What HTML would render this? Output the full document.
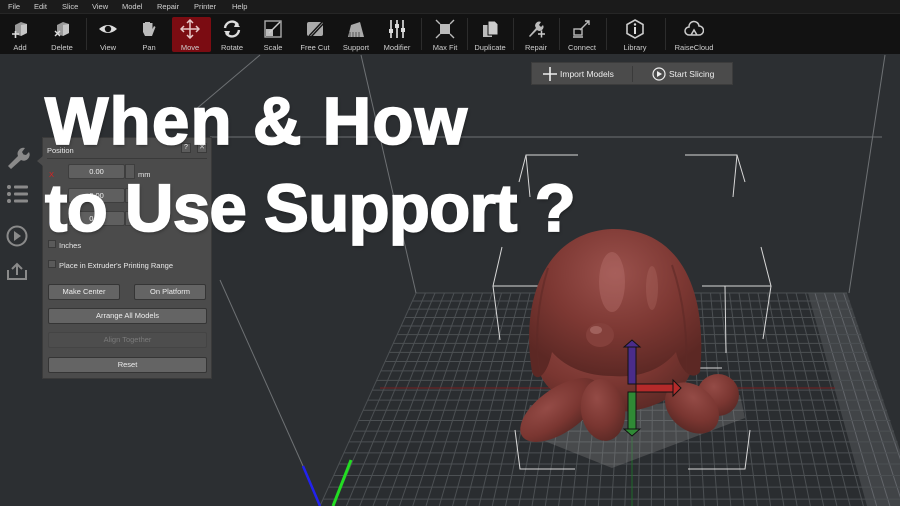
<!DOCTYPE html>
<html><head><meta charset="utf-8"><style>
*{margin:0;padding:0;box-sizing:border-box}
body{width:900px;height:506px;overflow:hidden;background:#2c2f32;font-family:"Liberation Sans",sans-serif;position:relative}
#menu{position:absolute;left:0;top:0;width:900px;height:13px;background:#1b1b1b;color:#d0d0d0;font-size:7.5px}
#menu span{position:absolute;top:2px}
#tb{position:absolute;left:0;top:13px;width:900px;height:41px;background:#121212;border-top:1px solid #262626}
.ti{position:absolute;top:0;width:42px;height:41px;text-align:center;color:#cfcfcf;font-size:7.5px}
.ti svg{position:absolute;left:11px;top:5px}
.ti b{position:absolute;left:-10px;right:-10px;top:29px;font-weight:normal}
.sep{position:absolute;top:4px;width:1px;height:32px;background:#2c2c2c}
.abs{position:absolute}
#panel{position:absolute;left:42px;top:137px;width:170px;height:242px;background:#4b4b4b;border:1px solid #3a3a3a;color:#e8e8e8;font-size:7.5px}
.btn{position:absolute;height:16px;background:#646464;border:1px solid #353535;border-radius:2px;text-align:center;line-height:14px;color:#eee;font-size:7.5px}
.spin{position:absolute;left:25px;width:57px;height:15px;background:#5f5f5f;border:1px solid #3e3e3e;border-radius:2px;text-align:center;line-height:13px;color:#eee}
.arr{position:absolute;left:82px;width:10px;height:15px;background:#5a5a5a;border:1px solid #3e3e3e}
.cb{position:absolute;left:5px;width:8px;height:8px;background:#5a5a5a;border:1px solid #3a3a3a}
.title{position:absolute;left:45px;color:#fff;font-weight:bold;font-size:67px;-webkit-text-stroke:1.8px #fff;text-shadow:1px 2px 3px rgba(0,0,0,.35);white-space:nowrap;line-height:1}
</style></head><body>

<svg class="abs" style="left:0;top:0" width="900" height="506" id="scene">
<defs>
<radialGradient id="bg1" cx="0.5" cy="0.3" r="0.7"><stop offset="0" stop-color="#9a514c"/><stop offset="0.55" stop-color="#7d3833"/><stop offset="1" stop-color="#5c2824"/></radialGradient>
<radialGradient id="bg2" cx="0.4" cy="0.3" r="0.75"><stop offset="0" stop-color="#944b46"/><stop offset="0.6" stop-color="#7a3631"/><stop offset="1" stop-color="#5a2925"/></radialGradient>
</defs>
<g id="grid"></g>
<g stroke="#6e7174" stroke-width="1" fill="none">
<line x1="361" y1="55" x2="416" y2="293"/>
<line x1="885" y1="55" x2="849" y2="293"/>
<line x1="210" y1="137" x2="882" y2="137"/>
<line x1="260" y1="55" x2="195" y2="110"/>
<line x1="220" y1="280" x2="303" y2="466"/>
</g>
<line x1="380" y1="388" x2="835" y2="388" stroke="#7a1f1f" stroke-width="1"/>
<line x1="632" y1="430" x2="632" y2="506" stroke="#1f6a2a" stroke-width="1"/>
<polygon points="522,432 612,468 745,418 740,395 600,410 530,405" fill="rgba(150,150,150,0.28)"/>
<g stroke="#d8d8d8" stroke-width="1" fill="none">
<polyline points="519,182 526,155 578,155"/><line x1="526" y1="155" x2="530" y2="197"/>
<polyline points="745,182 737,155 685,155"/><line x1="737" y1="155" x2="733" y2="197"/>
<polyline points="502,247 493,286 562,286"/><line x1="493" y1="286" x2="500" y2="340"/>
<polyline points="761,247 771,286 702,286"/><line x1="771" y1="286" x2="763" y2="339"/>
<line x1="725" y1="286" x2="726" y2="353"/><line x1="697" y1="368" x2="722" y2="368"/>
<polyline points="515,430 520,469 575,469"/>
<polyline points="750,430 745,469 688,469"/>
</g>
<g>
<ellipse cx="718" cy="395" rx="21" ry="21" fill="url(#bg2)"/>
<ellipse cx="615" cy="360" rx="78" ry="52" fill="url(#bg2)"/>
<path d="M532,372 C520,300 545,232 612,229 C680,228 708,290 700,372 C692,382 680,370 676,352 C660,372 635,378 612,376 C588,376 566,368 552,352 C548,372 538,385 532,372 Z" fill="url(#bg1)"/>
<path d="M548,268 C538,300 534,340 540,372" stroke="#5e2a26" stroke-width="2" fill="none" opacity="0.6"/>
<path d="M672,265 C684,300 688,340 686,372" stroke="#5e2a26" stroke-width="2" fill="none" opacity="0.6"/>
<ellipse cx="600" cy="335" rx="14" ry="12" fill="#84403b"/>
<ellipse cx="596" cy="330" rx="6" ry="4" fill="#a0615c"/>
<ellipse cx="560" cy="410" rx="46" ry="22" transform="rotate(-35 560 410)" fill="url(#bg2)"/>
<ellipse cx="603" cy="410" rx="22" ry="31" transform="rotate(-8 603 410)" fill="url(#bg2)"/>
<ellipse cx="692" cy="408" rx="30" ry="22" transform="rotate(40 692 408)" fill="url(#bg2)"/>
<ellipse cx="612" cy="282" rx="13" ry="30" fill="rgba(200,130,125,0.3)"/>
<ellipse cx="652" cy="288" rx="6" ry="22" fill="rgba(200,130,125,0.22)"/>
</g>
<g stroke="#111" stroke-width="1">
<rect x="628" y="346" width="8" height="38" fill="#4a2c8a"/>
<polygon points="624,347 632,340 640,347" fill="#4a2c8a"/>
<rect x="636" y="384" width="38" height="8" fill="#b52a2a"/>
<polygon points="673,380 681,388 673,396" fill="#b52a2a"/>
<rect x="628" y="392" width="8" height="38" fill="#2f8a35"/>
<polygon points="624,429 632,436 640,429" fill="#2f8a35"/>
</g>
<line x1="303" y1="466" x2="320" y2="506" stroke="#2222ee" stroke-width="2.5"/>
<line x1="351" y1="460" x2="333" y2="506" stroke="#22dd22" stroke-width="3"/>
</svg>
<script>
(function(){
var g=document.getElementById('grid'),s='';
var vx=659,vy=-246;
function L(y){return 416-0.45*(y-293)}
function O(y){return Math.min(900,847+0.34*(y-293))}
s+='<polygon points="416,293 847,293 900,450 900,506 320,506" fill="#2a2d30"/>';
s+='<polygon points="808,293 847,293 900,450 900,506 867,506" fill="rgba(120,123,126,0.3)"/>';
for(var x0=416;x0<=848;x0+=9.5){var x1=vx+(x0-vx)*(752/539);s+='<line x1="'+x0+'" y1="293" x2="'+x1+'" y2="506" stroke="'+(x0>808?'#62656a':'#4c5053')+'" stroke-width="1"/>';}
var y=293;while(y<507){s+='<line x1="'+L(y)+'" y1="'+y+'" x2="'+O(y)+'" y2="'+y+'" stroke="#4c5053" stroke-width="1"/>';y+=8*Math.pow((y+246)/539,1.3);}
g.innerHTML=s;
})();
</script>

<div id="menu">
<span style="left:8px">File</span><span style="left:34px">Edit</span><span style="left:62px">Slice</span><span style="left:92px">View</span><span style="left:122px">Model</span><span style="left:157px">Repair</span><span style="left:194px">Printer</span><span style="left:232px">Help</span>
</div>
<div id="tb">
<div class="abs" style="left:172px;top:3px;width:39px;height:35px;background:#7b0c12;border-radius:2px"></div>
<div class="ti" style="left:-1px"><svg width="20" height="20"><path d="M5 6 L11 3 L17 5 L17 14 L11 17 L5 15Z" fill="#9a9a9a"/><path d="M11 6 L17 5 L17 14 L11 17Z" fill="#c6c6c6"/><path d="M2 15h7M5.5 12v7" stroke="#ddd" stroke-width="1.6"/></svg><b>Add</b></div>
<div class="ti" style="left:41px"><svg width="20" height="20"><path d="M5 6 L11 3 L17 5 L17 14 L11 17 L5 15Z" fill="#9a9a9a"/><path d="M11 6 L17 5 L17 14 L11 17Z" fill="#c6c6c6"/><path d="M3 12l5 5M8 12l-5 5" stroke="#ddd" stroke-width="1.4"/></svg><b>Delete</b></div>
<div class="sep" style="left:86px"></div>
<div class="ti" style="left:87px"><svg width="20" height="20"><path d="M1 10 Q10 2 19 10 Q10 18 1 10Z" fill="#ddd"/><circle cx="10" cy="10" r="3.2" fill="#121212"/></svg><b>View</b></div>
<div class="ti" style="left:128px"><svg width="20" height="20"><path d="M4 8 V4 h2 V8 V3 h2.5 V8 V3 h2.5 V8 V4 h2.5 V10 L15 7 L16.5 8 L13 17 H6 L4 13Z" fill="#bbb"/></svg><b>Pan</b></div>
<div class="ti" style="left:169px"><svg width="20" height="20"><path d="M10 1 V19 M1 10 H19" stroke="#e8c8c8" stroke-width="1.5"/><path d="M7 4 L10 1 L13 4 M7 16 L10 19 L13 16 M4 7 L1 10 L4 13 M16 7 L19 10 L16 13" stroke="#e8c8c8" stroke-width="1.5" fill="none"/></svg><b>Move</b></div>
<div class="ti" style="left:211px"><svg width="20" height="20"><path d="M3 9 A7 7 0 0 1 16 6 M17 11 A7 7 0 0 1 4 14" stroke="#ddd" stroke-width="2.4" fill="none"/><path d="M14 3 L18 8 L12 8Z M6 17 L2 12 L8 12Z" fill="#ddd"/></svg><b>Rotate</b></div>
<div class="ti" style="left:252px"><svg width="20" height="20"><rect x="2" y="2" width="16" height="16" stroke="#aaa" stroke-width="1.4" fill="none"/><rect x="3" y="10" width="7" height="7" fill="#bbb"/><path d="M6 14 L17 3" stroke="#ccc" stroke-width="1.4"/></svg><b>Scale</b></div>
<div class="ti" style="left:294px"><svg width="20" height="20"><rect x="2" y="3" width="16" height="14" rx="2" fill="#aaa"/><path d="M4 17 L17 3 M6 18 L19 4" stroke="#121212" stroke-width="1.4"/></svg><b>Free Cut</b></div>
<div class="ti" style="left:335px"><svg width="20" height="20"><path d="M2 18 L5 6 L14 3 L18 18Z" fill="#aaa"/><path d="M4 18v-5M7 18v-5M10 18v-5M13 18v-5" stroke="#555" stroke-width="1"/></svg><b>Support</b></div>
<div class="ti" style="left:376px"><svg width="20" height="20"><path d="M4 1v18M10 1v18M16 1v18" stroke="#bbb" stroke-width="2"/><rect x="2" y="10" width="4" height="4" fill="#ddd"/><rect x="8" y="5" width="4" height="4" fill="#ddd"/><rect x="14" y="9" width="4" height="4" fill="#ddd"/></svg><b>Modifier</b></div>
<div class="sep" style="left:421px"></div>
<div class="ti" style="left:424px"><svg width="20" height="20"><rect x="5" y="5" width="10" height="10" fill="#bbb"/><path d="M1 1l4 4M19 1l-4 4M1 19l4-4M19 19l-4-4" stroke="#bbb" stroke-width="1.4"/></svg><b>Max Fit</b></div>
<div class="sep" style="left:467px"></div>
<div class="ti" style="left:469px"><svg width="20" height="20"><rect x="3" y="6" width="9" height="12" fill="#bbb"/><path d="M8 2h7l3 3v11H8Z" fill="#ccc" stroke="#121212" stroke-width="1"/></svg><b>Duplicate</b></div>
<div class="sep" style="left:513px"></div>
<div class="ti" style="left:515px"><svg width="20" height="20"><path d="M3 17 L10 9 A4 4 0 0 1 15 3 L13 6 L15 8 L17 6 A4 4 0 0 1 11 11 L4 18Z" fill="#bbb"/><path d="M12 15h7M15.5 11.5v7" stroke="#ccc" stroke-width="1.5"/></svg><b>Repair</b></div>
<div class="sep" style="left:559px"></div>
<div class="ti" style="left:561px"><svg width="20" height="20"><rect x="2" y="10" width="8" height="6" stroke="#bbb" fill="none" stroke-width="1.4"/><path d="M1 18h10M8 11 L17 2 M13 2h4v4" stroke="#bbb" stroke-width="1.4" fill="none"/></svg><b>Connect</b></div>
<div class="sep" style="left:606px"></div>
<div class="ti" style="left:614px"><svg width="20" height="20"><path d="M10 1 L18 5.5 V14.5 L10 19 L2 14.5 V5.5Z" stroke="#ccc" stroke-width="1.6" fill="none"/><path d="M10 8v7" stroke="#ddd" stroke-width="2"/><circle cx="10" cy="5.5" r="1.2" fill="#ddd"/></svg><b>Library</b></div>
<div class="sep" style="left:665px"></div>
<div class="ti" style="left:673px"><svg width="20" height="20"><path d="M5 16 A4 4 0 0 1 5 8 A5 5 0 0 1 15 7 A4.5 4.5 0 0 1 15 16Z M7 16 L10 11 L13 16" stroke="#ccc" stroke-width="1.5" fill="none"/></svg><b>RaiseCloud</b></div>
</div>

<div class="abs" style="left:531px;top:62px;width:202px;height:23px;background:#4b4b4b;border:1px solid #3c3c3c;color:#eee;font-size:8.5px">
<div class="abs" style="left:100px;top:3px;width:1px;height:16px;background:#3a3a3a"></div>
<svg class="abs" style="left:11px;top:4px" width="14" height="14"><path d="M7 0v14M0 7h14" stroke="#eee" stroke-width="1.6"/></svg>
<span class="abs" style="left:28px;top:6px">Import Models</span>
<svg class="abs" style="left:120px;top:4px" width="14" height="14"><circle cx="7" cy="7" r="6" stroke="#eee" stroke-width="1.2" fill="none"/><path d="M5 4 L10 7 L5 10Z" fill="#eee"/></svg>
<span class="abs" style="left:137px;top:6px">Start Slicing</span>
</div>

<svg class="abs" style="left:5px;top:144px" width="26" height="145">
<path d="M3 22 L13 12 A6 6 0 0 1 20 4 L17 8 L18.5 10.5 L21 11 L24 8 A6 6 0 0 1 16 16 L6 25Z" fill="#8a8a8a"/>
<g fill="#8a8a8a"><circle cx="4" cy="43" r="2"/><circle cx="4" cy="50" r="2"/><circle cx="4" cy="57" r="2"/><rect x="9" y="41.5" width="14" height="3" rx="1"/><rect x="9" y="48.5" width="14" height="3" rx="1"/><rect x="9" y="55.5" width="14" height="3" rx="1"/></g>
<circle cx="12" cy="92" r="9.5" stroke="#8a8a8a" stroke-width="2" fill="none"/><path d="M9 87 L16 92 L9 97Z" fill="#8a8a8a"/>
<path d="M3 126v9h18v-9 M12 131V120 M7 125 L12 120 L17 125" stroke="#8a8a8a" stroke-width="2" fill="none"/>
</svg>

<div id="panel">
<svg class="abs" style="left:-6px;top:18px" width="6" height="10"><path d="M6 0 L0 5 L6 10Z" fill="#4b4b4b"/></svg>
<span class="abs" style="left:4px;top:8px">Position</span>
<div class="abs" style="left:138px;top:5px;width:10px;height:10px;background:#5c5c5c;border:1px solid #3a3a3a;font-size:7px;text-align:center;line-height:8px">?</div>
<div class="abs" style="left:154px;top:5px;width:10px;height:10px;background:#5c5c5c;border:1px solid #3a3a3a;font-size:7px;text-align:center;line-height:8px">✕</div>
<div class="abs" style="left:4px;top:20px;width:160px;height:1px;background:#3a3a3a"></div>
<span class="abs" style="left:6px;top:32px;color:#e02020">X</span>
<div class="spin" style="top:26px">0.00</div><div class="arr" style="top:26px"></div><span class="abs" style="left:95px;top:32px">mm</span>
<span class="abs" style="left:6px;top:56px;color:#20c020">Y</span>
<div class="spin" style="top:50px">0.00</div><div class="arr" style="top:50px"></div>
<span class="abs" style="left:6px;top:79px;color:#2030e0">Z</span>
<div class="spin" style="top:73px">0.00</div><div class="arr" style="top:73px"></div>
<div class="cb" style="top:102px"></div><span class="abs" style="left:16px;top:103px">Inches</span>
<div class="cb" style="top:122px"></div><span class="abs" style="left:16px;top:123px">Place in Extruder's Printing Range</span>
<div class="btn" style="left:5px;top:146px;width:72px">Make Center</div>
<div class="btn" style="left:91px;top:146px;width:72px">On Platform</div>
<div class="btn" style="left:5px;top:170px;width:159px">Arrange All Models</div>
<div class="btn" style="left:5px;top:194px;width:159px;background:#4d4d4d;color:#7a7a7a;border-color:#444">Align Together</div>
<div class="btn" style="left:5px;top:219px;width:159px">Reset</div>
</div>

<div class="title" style="top:88px;letter-spacing:1.4px">When &amp; How</div>
<div class="title" style="top:175px;letter-spacing:-0.6px">to Use Support ?</div>
</body></html>
